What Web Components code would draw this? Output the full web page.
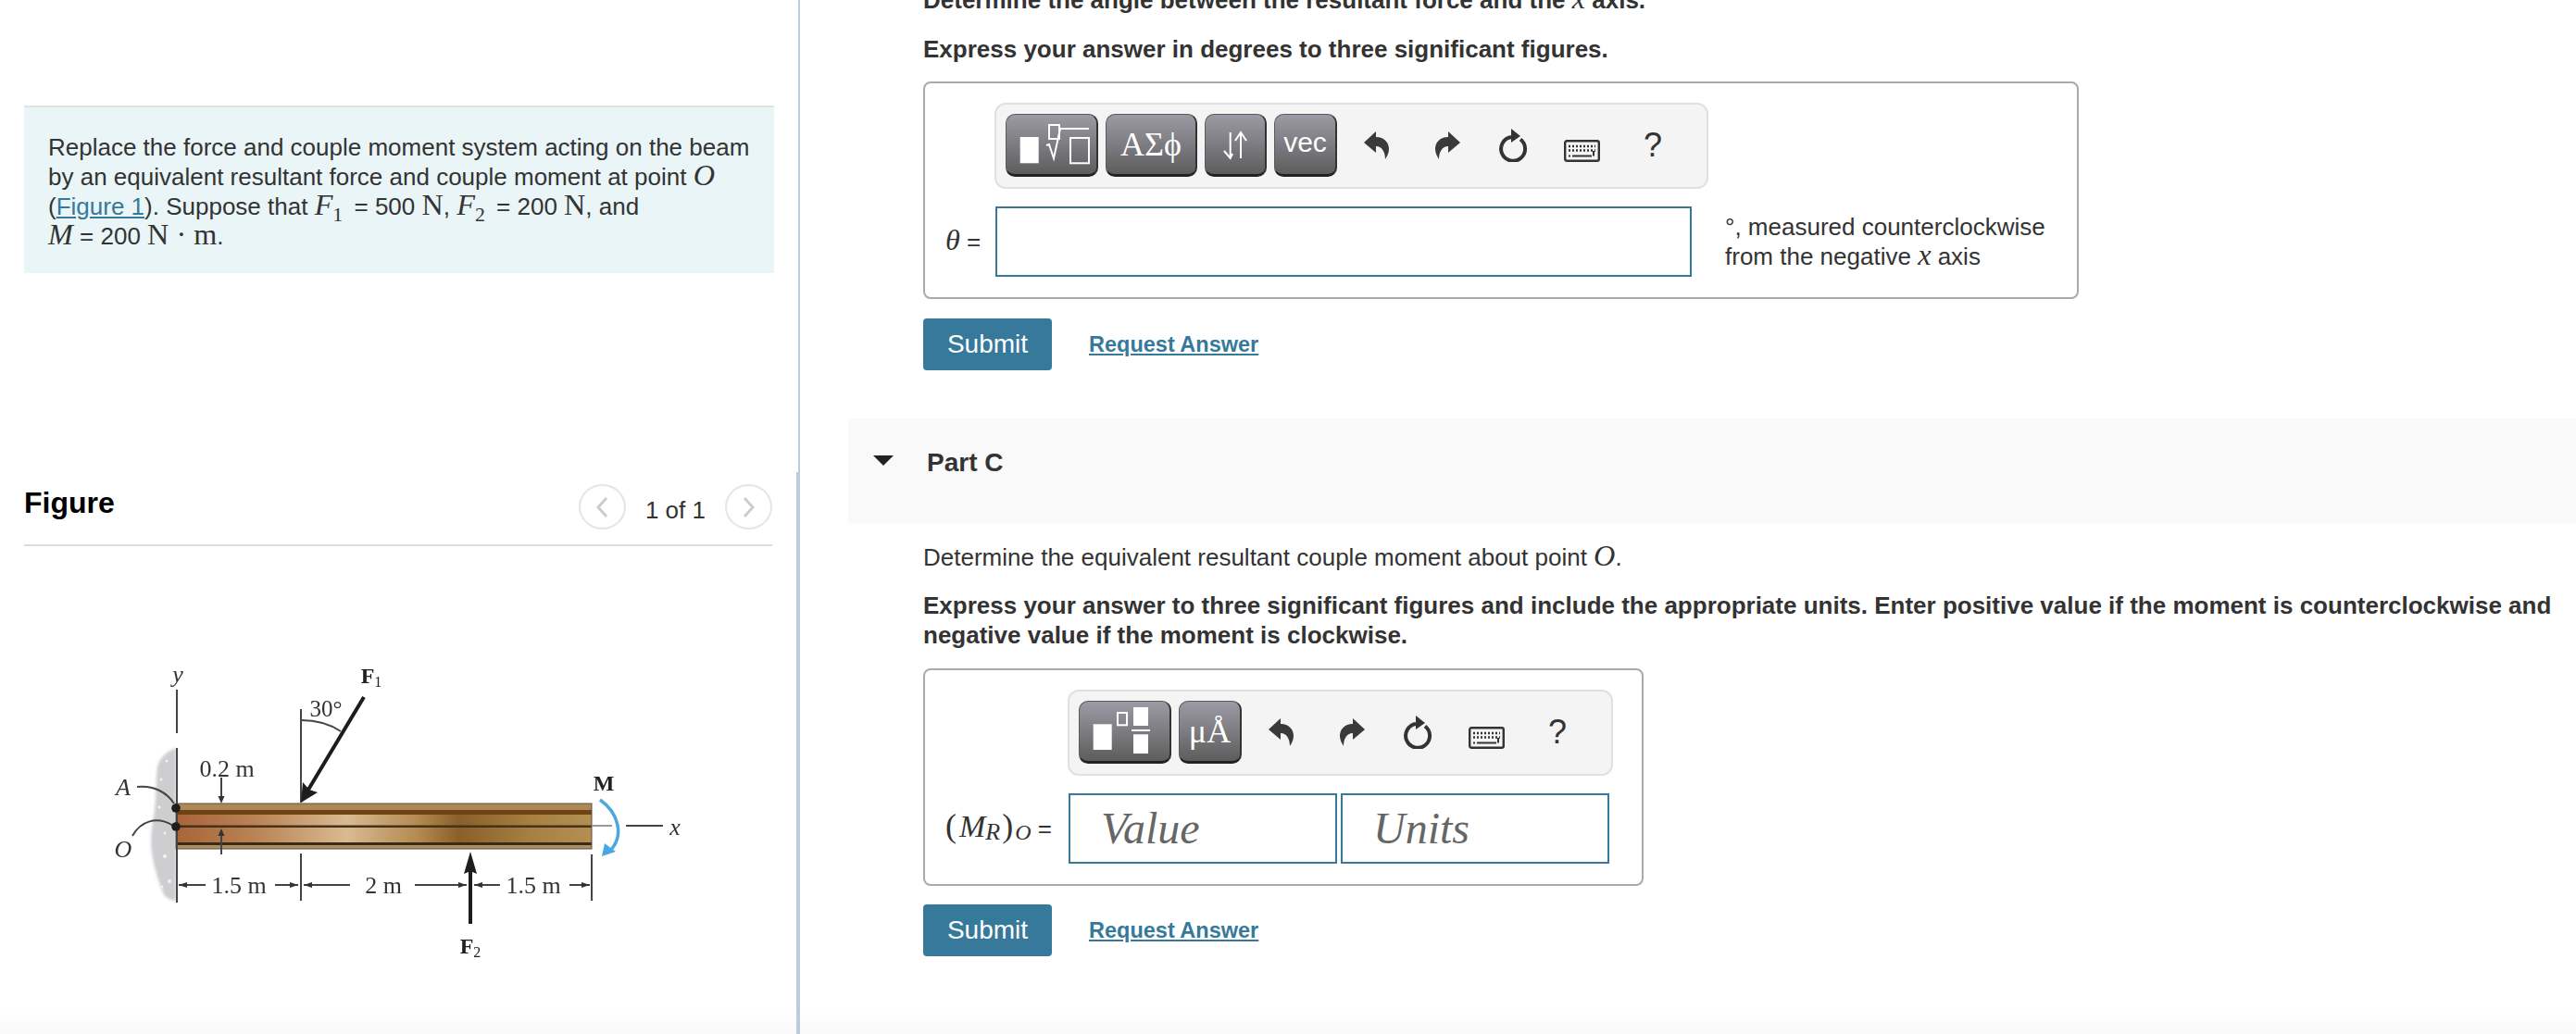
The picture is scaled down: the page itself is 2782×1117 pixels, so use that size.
<!DOCTYPE html>
<html>
<head>
<meta charset="utf-8">
<title>Part C</title>
<style>
  html, body { margin: 0; padding: 0; height: 1117px; overflow: hidden; }
  body {
    background: linear-gradient(to bottom, #fff 1085px, #fafafa 1117px);
    font-family: "Liberation Sans", Arial, sans-serif;
    font-size: 26px;
    line-height: 32px;
    color: #333;
  }
</style>
</head>
<body>
<mp-page>
  <mp-left slot="left">
    <problem-text>
      Replace the force and couple moment system acting on the beam<br>
      by an equivalent resultant force and couple moment at point <m-i>O</m-i><br>
      (<text-link>Figure 1</text-link>). Suppose that <m-i>F</m-i><m-s>1</m-s> = 500 <m-r>N</m-r>, <m-i>F</m-i><m-s>2</m-s> = 200 <m-r>N</m-r>, and<br>
      <m-i>M</m-i> = 200 <m-r>N · m</m-r>.
    </problem-text>
    <figure-header slot="lower"></figure-header>
    <beam-figure slot="lower"></beam-figure>
  </mp-left>

  <mp-right slot="right">
    <text-line style="margin-top:-16px"><b>Determine the angle between the resultant force and the <m-i>x</m-i> axis.</b></text-line>
    <text-line style="margin-top:21px"><b>Express your answer in degrees to three significant figures.</b></text-line>
    <answer-box style="margin-top:19px;width:1248px;--label:53px;--bar:771px">
      <tool-btn slot="tools" style="width:100px"><svg width="100" height="68" viewBox="0 0 100 68" fill="none" stroke="#fff" stroke-width="2"><rect x="15.700" y="26" width="20" height="28.300" fill="#fff" stroke="none"/><rect x="47" y="13" width="11" height="15"/><path d="M44 35l3-1 5 15 7-32h31"/><rect x="70" y="27" width="20" height="27.300"/></svg></tool-btn>
      <tool-btn slot="tools" style="width:99px" serif>ΑΣϕ</tool-btn>
      <tool-btn slot="tools" style="width:67px"><svg width="67" height="68" viewBox="0 0 67 68" fill="none" stroke="#fff" stroke-width="2"><path d="M27.700 21v28M21 41l6.700 8 2.300-5"/><path d="M39 49V21M33 30l6-9 6 9"/></svg></tool-btn>
      <tool-btn slot="tools" style="width:68px;--shift:-2px">vec</tool-btn>
      <answer-input style="width:752px"></answer-input>
      <span slot="label"><m-i>θ</m-i> =</span>
      <span slot="after">°, measured counterclockwise<br>from the negative <m-i>x</m-i> axis</span>
    </answer-box>
    <submit-row style="margin-top:21px"></submit-row>

    <part-header style="margin-top:52px">Part C</part-header>

    <text-line style="margin-top:21px">Determine the equivalent resultant couple moment about point <m-i>O</m-i>.</text-line>
    <text-line style="margin-top:20px"><b>Express your answer to three significant figures and include the appropriate units. Enter positive value if the moment is counterclockwise and<br>negative value if the moment is clockwise.</b></text-line>
    <answer-box style="margin-top:20px;width:778px;--label:132px;--bar:589px">
      <tool-btn slot="tools" style="width:100px"><svg width="100" height="68" viewBox="0 0 100 68" fill="none" stroke="#fff" stroke-width="2"><rect x="15.700" y="26.300" width="20" height="27.700" fill="#fff" stroke="none"/><rect x="42" y="14" width="10" height="13.300"/><rect x="59" y="8" width="16" height="20" fill="#fff" stroke="none"/><path d="M57 33h20"/><rect x="59" y="37.300" width="16" height="20.700" fill="#fff" stroke="none"/></svg></tool-btn>
      <tool-btn slot="tools" style="width:68px" serif>μÅ</tool-btn>
      <answer-input style="width:290px" placeholder="Value"></answer-input>
      <answer-input style="width:290px;margin-left:4px" placeholder="Units"></answer-input>
      <span slot="label"><m-r style="font-size:36px">(</m-r><m-i style="font-size:34px;margin-left:3px">M</m-i><m-i style="font-size:26px;vertical-align:-3px">R</m-i><m-r style="font-size:36px;margin-left:2px">)</m-r><m-i style="font-size:24px;vertical-align:-3px;margin-left:2px">O</m-i> =</span>
    </answer-box>
    <submit-row style="margin-top:20px"></submit-row>
  </mp-right>
</mp-page>

<script>
const SERIF = '"Liberation Serif", "Times New Roman", serif';

function render(el, html) {
  el.attachShadow({mode: 'open'}).innerHTML = html.trim();
}

class MpPage extends HTMLElement {
  connectedCallback() {
    render(this, `
      <style>
        :host { display: grid; grid-template-columns: 864px 1fr; height: 1117px; overflow: hidden; }
      </style>
      <slot name="left"></slot>
      <slot name="right"></slot>
    `);
  }
}

class MpLeft extends HTMLElement {
  connectedCallback() {
    render(this, `
      <style>
        :host { display: flex; flex-direction: column; height: 1117px; }
        .upper { height: 510px; box-sizing: border-box; padding: 114px 0 0 26px; border-right: 2px solid #bccbde; }
        .lower { flex: 1; box-sizing: border-box; padding-left: 26px; border-right: 4px solid #bccbde; }
      </style>
      <div class="upper"><slot></slot></div>
      <div class="lower"><slot name="lower"></slot></div>
    `);
  }
}

class MpRight extends HTMLElement {
  connectedCallback() {
    render(this, `
      <style>
        :host { display: block; padding-left: 133px; overflow: hidden; }
      </style>
      <slot></slot>
    `);
  }
}

class ProblemText extends HTMLElement {
  connectedCallback() {
    render(this, `
      <style>
        :host {
          display: block;
          width: 810px;
          height: 181px;
          box-sizing: border-box;
          padding: 27px 0 0 26px;
          background: #e9f5f7;
          border-top: 2px solid #dfe3e4;
          white-space: nowrap;
        }
      </style>
      <slot></slot>
    `);
  }
}

class TextLink extends HTMLElement {
  connectedCallback() {
    render(this, `<style>:host { color: #37799b; text-decoration: underline; }</style><slot></slot>`);
  }
}

class MathItalic extends HTMLElement {
  connectedCallback() {
    render(this, `<style>:host { font-family: ${SERIF}; font-style: italic; font-weight: normal; font-size: 1.24em; line-height: 0; }</style><slot></slot>`);
  }
}

class MathRoman extends HTMLElement {
  connectedCallback() {
    render(this, `<style>:host { font-family: ${SERIF}; font-size: 1.24em; line-height: 0; }</style><slot></slot>`);
  }
}

class MathSub extends HTMLElement {
  connectedCallback() {
    render(this, `<style>:host { font-family: ${SERIF}; font-size: .84em; line-height: 0; vertical-align: -.3em; margin-right: 5px; }</style><slot></slot>`);
  }
}

class FigureHeader extends HTMLElement {
  connectedCallback() {
    render(this, `
      <style>
        :host {
          display: flex;
          justify-content: space-between;
          width: 808px;
          height: 80px;
          box-sizing: border-box;
          padding-top: 13px;
          border-bottom: 2px solid #ddd;
        }
        h2 { margin: 4px 0 0; font-size: 32px; line-height: 32px; color: #000; font-weight: bold; }
        .pager { display: flex; align-items: flex-start; gap: 21px; }
        .count { margin-top: 12px; }
        .round {
          width: 51px; height: 49px; box-sizing: border-box;
          border: 2px solid #e5e5e5; border-radius: 50%;
          display: flex; align-items: center; justify-content: center;
        }
        svg { display: block; }
      </style>
      <h2>Figure</h2>
      <div class="pager">
        <div class="round"><svg width="14" height="24" viewBox="0 0 14 24" fill="none" stroke="#ccc" stroke-width="3"><path d="M12 2L3 12l9 10"/></svg></div>
        <span class="count">1 of 1</span>
        <div class="round"><svg width="14" height="24" viewBox="0 0 14 24" fill="none" stroke="#ccc" stroke-width="3"><path d="M2 2l9 10-9 10"/></svg></div>
      </div>
    `);
  }
}

class BeamFigure extends HTMLElement {
  connectedCallback() {
    render(this, `
      <style>
        :host { display: block; margin: 100px 0 0 34px; width: 720px; height: 427px; }
        svg { display: block; filter: blur(.6px); }
        text { font-family: ${SERIF}; fill: #333; font-size: 26px; text-anchor: middle; dominant-baseline: central; }
        .it { font-style: italic; }
        .bd { font-weight: bold; fill: #222; }
      </style>
      <svg width="720" height="427" viewBox="60 690 720 427" fill="none">
        <defs>
          <linearGradient id="wood" x1="191" x2="639" y1="0" y2="0" gradientUnits="userSpaceOnUse">
            <stop offset="0" stop-color="#a9653a"/>
            <stop offset=".18" stop-color="#b98152"/>
            <stop offset=".41" stop-color="#d9ba90"/>
            <stop offset=".58" stop-color="#b48a50"/>
            <stop offset=".68" stop-color="#8a5f29"/>
            <stop offset=".85" stop-color="#a67f41"/>
            <stop offset="1" stop-color="#b58e52"/>
          </linearGradient>
          <filter id="soft"><feGaussianBlur stdDeviation="1.500"/></filter>
        </defs>
        <path d="M190 808c-8 3-16 8-20 20-2 14-1 30-3 48-3 16-5 30-3 46 3 18 9 36 14 46 4 3 8 5 12 5z" fill="#cdced0" filter="url(#soft)"/>
        <g fill="#f2f2f2"><circle cx="180" cy="822" r="1.500"/><circle cx="174" cy="842" r="1.500"/><circle cx="172" cy="872" r="1.500"/><circle cx="178" cy="900" r="1.500"/><circle cx="178" cy="925" r="2"/><circle cx="183" cy="952" r="2"/><circle cx="175" cy="958" r="1.500"/></g>

        <rect x="190" y="868" width="449" height="49" fill="url(#wood)"/>
        <rect x="190" y="868" width="449" height="7" fill="#ad8a55"/>
        <rect x="190" y="875" width="449" height="5" fill="#6f4315"/>
        <rect x="190" y="891.500" width="449" height="2.500" fill="#43321e"/>
        <rect x="190" y="910" width="449" height="3" fill="#3a2a18"/>
        <rect x="190" y="913" width="449" height="4" fill="#ad8f62"/>
        <rect x="190" y="868" width="449" height="49" stroke="#5b5345" stroke-width="1"/>

        <g stroke="#444" stroke-width="2">
          <path d="M191 745v47M191 808v167"/>
          <path d="M325 766v101"/>
          <path d="M325 922v51M639 923v50"/>
          <path d="M239 840v22M239 901v22"/>
          <path d="M193 956h29M297 956h25M328 956h50M448 956h56M512 956h28M615 956h22"/>
          <path d="M639 892h22" stroke="#999"/>
          <path d="M676 892h40"/>
          <path d="M325 778c17 0 31 4 43 12"/>
          <path d="M148 850c18-2 32 6 40 18M143 903c9-16 26-22 44-11"/>
        </g>
        <g fill="#333">
          <path d="M239 868l-3.500-8h7zM239 895l-3.500 8h7z"/>
          <path d="M193 956l9-3v6zM322 956l-9-3v6zM328 956l9-3v6zM504 956l-9-3v6zM512 956l9-3v6zM637 956l-9-3v6z"/>
        </g>
        <g fill="#1d1d1d">
          <circle cx="190" cy="873" r="4.800"/>
          <circle cx="190" cy="893" r="4.800"/>
          <path d="M393 753L333 853" stroke="#1d1d1d" stroke-width="4"/>
          <path d="M325 867l2-22 7 8 9 3z"/>
          <path d="M508 998v-62" stroke="#1d1d1d" stroke-width="4"/>
          <path d="M508 920l7 24-7-3-7 3z"/>
        </g>
        <path d="M648 864c20 14 27 39 10 56" stroke="#4aa8de" stroke-width="3.500"/>
        <path d="M650 925l3-14 12 9z" fill="#4aa8de"/>

        <text x="192" y="728" class="it">y</text>
        <text x="401" y="730" class="bd" style="font-size:24px">F<tspan dy="6" style="font-size:16px;font-weight:normal">1</tspan></text>
        <text x="352" y="765" style="font-size:25px">30°</text>
        <text x="245" y="830">0.2 m</text>
        <text x="133" y="850" class="it">A</text>
        <text x="133" y="917" class="it">O</text>
        <text x="652" y="846" class="bd" style="font-size:24px">M</text>
        <text x="729" y="893" class="it">x</text>
        <text x="258" y="956">1.5 m</text>
        <text x="414" y="956">2 m</text>
        <text x="576" y="956">1.5 m</text>
        <text x="508" y="1022" class="bd" style="font-size:24px">F<tspan dy="6" style="font-size:16px;font-weight:normal">2</tspan></text>
      </svg>
    `);
  }
}

class TextLine extends HTMLElement {
  connectedCallback() {
    render(this, `<style>:host { display: block; white-space: nowrap; }</style><slot></slot>`);
  }
}

class PartHeader extends HTMLElement {
  connectedCallback() {
    render(this, `
      <style>
        :host {
          display: flex;
          align-items: flex-start;
          margin-left: -81px;
          height: 113px;
          box-sizing: border-box;
          padding: 32px 0 0 27px;
          background: #f9f9f9;
          font-weight: bold;
          font-size: 28px;
        }
        i { width: 22px; height: 11px; margin: 8px 36px 0 0; background: #222; clip-path: polygon(0 0, 100% 0, 50% 100%); }
      </style>
      <i></i><slot></slot>
    `);
  }
}

class ToolBtn extends HTMLElement {
  connectedCallback() {
    render(this, `
      <style>
        :host {
          display: flex;
          align-items: center;
          justify-content: center;
          height: 68px;
          box-sizing: border-box;
          border: 1px solid #5b5b5b;
          border-bottom: 3px solid #222;
          border-right: 2px solid #333;
          border-radius: 10px;
          background: linear-gradient(to bottom, #9c9ba5, #5d5d5d);
          color: #fff;
          font-size: 30px;
        }
        :host([serif]) { font-family: ${SERIF}; font-size: 36px; }
        span { position: relative; top: var(--shift, 0); display: flex; flex: none; }
      </style>
      <span><slot></slot></span>
    `);
  }
}

class ToolIcons extends HTMLElement {
  connectedCallback() {
    render(this, `
      <style>
        :host { display: flex; align-items: center; margin-left: 21px; color: #333; }
        svg { display: block; }
        .redo { margin-left: 50px; transform: scaleX(-1); }
        .reset { margin-left: 42px; }
        .kbd { margin-left: 38px; margin-top: 11px; }
        .help { margin-left: 47px; font-size: 36px; line-height: 36px; }
      </style>
      <svg width="27" height="30" viewBox="0 0 27 30" fill="#3a3a3a"><path d="M0 12L13 0v6c9 0 14 6 14 13 0 4-2 8-4 11 0-7-3-14-10-14v7z"/></svg>
      <svg class="redo" width="27" height="30" viewBox="0 0 27 30" fill="#3a3a3a"><path d="M0 12L13 0v6c9 0 14 6 14 13 0 4-2 8-4 11 0-7-3-14-10-14v7z"/></svg>
      <svg class="reset" width="32" height="36" viewBox="0 0 32 36" fill="none"><path d="M23 11.500A13 13 0 1 1 13 9" stroke="#333" stroke-width="4"/><path d="M13 0l10 8-10 7z" fill="#333"/></svg>
      <svg class="kbd" width="39" height="24" viewBox="0 0 39 24" fill="none"><rect x="1.200" y="1.200" width="36.600" height="21.600" rx="2" stroke="#333" stroke-width="2.400"/><path d="M5 7h29M5 11.500h29" stroke="#333" stroke-width="2.500" stroke-dasharray="2 2"/><path d="M9 17.500h21M32 12v5.500" stroke="#333" stroke-width="2"/><path d="M5 17.500h2" stroke="#333" stroke-width="2"/></svg>
      <span class="help">?</span>
    `);
  }
}

class AnswerBox extends HTMLElement {
  connectedCallback() {
    render(this, `
      <style>
        :host {
          display: grid;
          grid-template-columns: var(--label) 1fr;
          align-content: start;
          row-gap: 19px;
          height: 235px;
          box-sizing: border-box;
          padding: 21px 0 0 22px;
          border: 2px solid #aaa;
          border-radius: 8px;
        }
        .bar {
          grid-column: 2;
          display: flex;
          align-items: center;
          width: var(--bar);
          height: 93px;
          box-sizing: border-box;
          padding: 0 0 1px 10px;
          gap: 8px;
          background: #f4f4f4;
          border: 2px solid #e0e0e0;
          border-radius: 12px;
        }
        .label { align-self: center; text-align: right; padding-right: 17px; white-space: nowrap; }
        .row { display: flex; align-items: center; margin-left: 1px; height: 76px; }
        .after { margin-left: 36px; white-space: nowrap; }
      </style>
      <div class="bar"><slot name="tools"></slot><tool-icons></tool-icons></div>
      <div class="label"><slot name="label"></slot></div>
      <div class="row"><slot></slot><div class="after"><slot name="after"></slot></div></div>
    `);
  }
}

class AnswerInput extends HTMLElement {
  connectedCallback() {
    const hint = this.getAttribute('placeholder') || '';
    render(this, `
      <style>
        :host {
          display: block;
          height: 76px;
          box-sizing: border-box;
          border: 2px solid #37799b;
          background: #fff;
          padding: 0 0 0 33px;
          font-family: ${SERIF};
          font-style: italic;
          font-size: 48px;
          line-height: 72px;
          color: #666;
          flex: none;
        }
      </style>
      ${hint}
    `);
  }
}

class SubmitRow extends HTMLElement {
  connectedCallback() {
    render(this, `
      <style>
        :host { display: flex; align-items: center; height: 56px; }
        .submit {
          width: 139px; height: 56px; border-radius: 4px;
          background: #37799b; color: #fff;
          font-size: 28px; line-height: 56px; text-align: center;
        }
        a { margin-left: 40px; color: #37799b; font-weight: bold; font-size: 23.500px; text-decoration: underline; }
      </style>
      <div class="submit">Submit</div>
      <a>Request Answer</a>
    `);
  }
}

customElements.define('mp-page', MpPage);
customElements.define('mp-left', MpLeft);
customElements.define('mp-right', MpRight);
customElements.define('problem-text', ProblemText);
customElements.define('text-link', TextLink);
customElements.define('m-i', MathItalic);
customElements.define('m-r', MathRoman);
customElements.define('m-s', MathSub);
customElements.define('figure-header', FigureHeader);
customElements.define('beam-figure', BeamFigure);
customElements.define('text-line', TextLine);
customElements.define('part-header', PartHeader);
customElements.define('tool-btn', ToolBtn);
customElements.define('tool-icons', ToolIcons);
customElements.define('answer-box', AnswerBox);
customElements.define('answer-input', AnswerInput);
customElements.define('submit-row', SubmitRow);
</script>
</body>
</html>
